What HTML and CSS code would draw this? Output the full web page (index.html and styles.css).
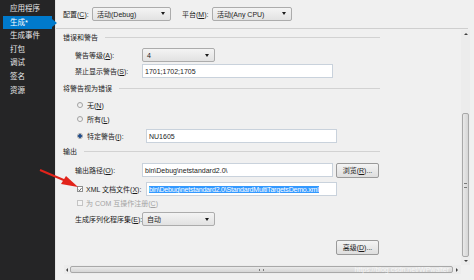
FILE: index.html
```html
<!DOCTYPE html>
<html lang="zh-CN">
<head>
  <meta charset="UTF-8" />
  <meta name="viewport" content="width=device-width, initial-scale=1.0"/>
  <title>生成</title>
  <link rel="stylesheet" href="styles.css">
</head>
<body>
<div class="window">

  <nav class="sidebar">
    <div class="nav-item">应用程序</div>
    <div class="nav-item active">生成*</div>
    <div class="nav-item">生成事件</div>
    <div class="nav-item">打包</div>
    <div class="nav-item">调试</div>
    <div class="nav-item">签名</div>
    <div class="nav-item">资源</div>
  </nav>

  <main class="page">
    <div class="topbar">
      <span class="top-label">配置(<u>C</u>):</span>
      <div class="select config"><span>活动(Debug)</span><i class="caret"></i></div>
      <span class="top-label second">平台(<u>M</u>):</span>
      <div class="select platform"><span>活动(Any CPU)</span><i class="caret"></i></div>
    </div>

    <div class="scroller">
      <div class="form">
        <div class="section first">错误和警告</div>
        <div class="row row-level">
          <span class="field-label">警告等级(<u>A</u>):</span>
          <div class="select small"><span>4</span><i class="caret"></i></div>
        </div>
        <div class="row row-tight">
          <span class="field-label">禁止显示警告(<u>S</u>):</span>
          <div class="input">1701;1702;1705</div>
        </div>

        <div class="section s-errors">将警告视为错误</div>
        <div class="row choice first-choice">
          <span class="radio"></span><span>无(<u>N</u>)</span>
        </div>
        <div class="row choice">
          <span class="radio"></span><span>所有(<u>L</u>)</span>
        </div>
        <div class="row choice with-input">
          <span class="choice-label"><span class="radio checked"></span><span>特定警告(<u>I</u>):</span></span>
          <div class="input">NU1605</div>
        </div>

        <div class="section s-output">输出</div>
        <div class="row row-path">
          <span class="field-label">输出路径(<u>O</u>):</span>
          <div class="input">bin\Debug\netstandard2.0\</div>
          <div class="button">浏览(<u>R</u>)...</div>
        </div>
        <div class="row choice row-xml">
          <span class="choice-label">
            <span class="check"><svg width="5" height="5" viewBox="0 0 5 5"><path d="M0.6 2.6 L1.9 4 L4.4 0.8" fill="none" stroke="#2b2b2b" stroke-width="0.9"/></svg></span>
            <span>XML 文档文件(<u>X</u>):</span>
          </span>
          <div class="input"><span class="selected">bin\Debug\netstandard2.0\StandardMultiTargetsDemo.xml</span></div>
        </div>
        <div class="row choice disabled">
          <span class="check off"></span><span>为 COM 互操作注册(<u>C</u>)</span>
        </div>
        <div class="row row-serial">
          <span class="field-label">生成序列化程序集(<u>E</u>):</span>
          <div class="select small"><span>自动</span><i class="caret"></i></div>
        </div>
        <div class="row row-advanced">
          <div class="button">高级(<u>D</u>)...</div>
        </div>
      </div>

      <div class="vscroll">
        <i class="arrow up"></i>
        <div class="vspace"></div>
        <div class="thumb vthumb"><i class="grip"></i></div>
        <i class="arrow down"></i>
      </div>

      <div class="hscroll">
        <i class="arrow left"></i>
        <div class="thumb hthumb"><i class="grip"></i></div>
        <i class="arrow right"></i>
        <span class="watermark">https://blog.csdn.net/WPwalter</span>
      </div>
    </div>
  </main>

  <!-- red annotation arrow -->
  <svg class="annotation" width="90" height="30" viewBox="0 0 90 30">
    <path d="M40 6 L66 17" stroke="#e2231a" stroke-width="2" fill="none"/>
    <path d="M78 23 L61 20 L66 12 Z" fill="#e2231a"/>
  </svg>
</div>
</body>
</html>
```

FILE: styles.css
```css
body {
  margin: 0;
  font-family: "Liberation Sans", "Noto Sans CJK SC", sans-serif;
  font-size: 7px;
  color: #1b1b1b;
  background-color: #f0f0f0;
}

u {
  text-decoration: underline;
  text-underline-offset: 1px;
}

.window {
  position: relative;
  display: flex;
  width: 474px;
  height: 280px;
  overflow: hidden;
  white-space: nowrap;
}

/* left navigation */

.sidebar {
  width: 55px;
  flex: none;
  padding-top: 2px;
  background-color: #252526;
}

.nav-item {
  position: relative;
  height: 13.6px;
  line-height: 13.6px;
  margin-left: 3px;
  width: 49px;
  padding-left: 7px;
  box-sizing: border-box;
  color: #e8e8e8;
  font-size: 7.5px;
}

.nav-item.active {
  background-color: #007acc;
  color: #ffffff;
}

.nav-item.active::after {
  content: "";
  position: absolute;
  right: -5px;
  top: 3px;
  border-left: 5px solid #007acc;
  border-top: 4px solid transparent;
  border-bottom: 4px solid transparent;
}

/* page */

.page {
  flex: 1;
  display: flex;
  flex-direction: column;
  border-left: 1px solid #e4e4e4;
}

.topbar {
  display: flex;
  align-items: center;
  padding-left: 7px;
  margin-right: 6px;
  border-bottom: 1px solid #cfcfcf;
  box-sizing: border-box;
  height: 29px;
  padding-bottom: 1px;
}

.top-label {
  width: 29px;
}

.top-label.second {
  width: 30px;
  margin-left: 11px;
}

.select {
  height: 14px;
  display: flex;
  align-items: center;
  justify-content: space-between;
  padding: 0 5px 0 4px;
  box-sizing: border-box;
  border: 1px solid #acacac;
  border-radius: 2px;
  background: linear-gradient(#f4f4f4, #e2e2e2);
}

.select.config {
  width: 79px;
}

.select.platform {
  width: 80px;
}

.select.small {
  width: 73px;
}

.caret {
  width: 0;
  height: 0;
  border-top: 3px solid #1b1b1b;
  border-left: 2px solid transparent;
  border-right: 2px solid transparent;
}

.scroller {
  flex: 1;
  display: grid;
  grid-template-columns: 405px 9px;
  grid-template-rows: 235px 9px;
  margin-top: 1px;
}

.form {
  padding-left: 7px;
  overflow: hidden;
}

.section {
  width: 317px;
  height: 12px;
  display: flex;
  align-items: center;
}

.section::after {
  content: "";
  flex: 1;
  margin-left: 7px;
  border-top: 1px solid #d2d2d2;
}

.section.first {
  margin-top: 1px;
}

.section.s-errors {
  margin-top: 4px;
}

.section.s-output {
  margin-top: 2px;
}

.row {
  height: 14px;
  display: flex;
  align-items: center;
  padding-left: 12px;
}

.row-level {
  margin-top: 5px;
}

.row-tight {
  margin-top: 2px;
}

.field-label {
  width: 67px;
  flex: none;
}

.input {
  width: 191px;
  height: 14px;
  box-sizing: border-box;
  padding: 0 2px;
  display: flex;
  align-items: center;
  background-color: #ffffff;
  border: 1px solid #c9d2dc;
  overflow: hidden;
}

.selected {
  background-color: #3399ff;
  color: #ffffff;
  letter-spacing: -0.2px;
}

.button {
  width: 43px;
  height: 15px;
  box-sizing: border-box;
  margin-left: 3px;
  display: flex;
  align-items: center;
  justify-content: center;
  border: 1px solid #9a9a9a;
  border-radius: 2px;
  background: linear-gradient(#f4f4f4, #dedede);
}

/* radios and checkboxes */

.choice {
  padding-left: 14px;
  gap: 4px;
}

.first-choice {
  margin-top: 4px;
}

.with-input {
  margin-top: 3px;
}

.choice-label {
  width: 65px;
  flex: none;
  display: flex;
  align-items: center;
  gap: 4px;
}

.radio {
  width: 6px;
  height: 6px;
  box-sizing: border-box;
  border-radius: 50%;
  border: 1px solid #a2a2a2;
  background: linear-gradient(#e8e8e8, #fafafa);
}

.radio.checked {
  background: radial-gradient(circle, #1f4d8f 0 1.6px, #f2f2f2 2px);
}

.check {
  flex: none;
  width: 6px;
  height: 6px;
  box-sizing: border-box;
  border: 1px solid #8e8f8f;
  background-color: #ffffff;
  display: flex;
  align-items: center;
  justify-content: center;
}

.check.off {
  border-color: #c4c4c4;
  background-color: #f4f4f4;
}

.row-path {
  margin-top: 6px;
}

.row-xml {
  margin-top: 5px;
}

.row-xml .choice-label {
  gap: 3px;
}

.disabled {
  color: #a3a3a3;
  gap: 3px;
}

.row-serial {
  margin-top: 2px;
}

.row-advanced {
  margin-top: 14px;
  padding-left: 270px;
}

/* scrollbars */

.vscroll {
  grid-column: 2;
  grid-row: 1;
  display: flex;
  flex-direction: column;
  align-items: center;
  background-color: #ececec;
}

.vspace {
  height: 75px;
}

.thumb {
  box-sizing: border-box;
  border: 1px solid #a8a8a8;
  border-radius: 2px;
  background: linear-gradient(90deg, #e9e9e9, #d6d6d6);
  display: flex;
  align-items: center;
  justify-content: center;
}

.vthumb {
  width: 7px;
  flex: 1;
}

.grip {
  width: 3px;
  height: 3px;
  border-top: 1px solid #7a7a7a;
  border-bottom: 1px solid #7a7a7a;
}

.hthumb .grip {
  width: 3px;
  height: 2px;
  border: none;
  border-left: 1px solid #7a7a7a;
  border-right: 1px solid #7a7a7a;
}

.arrow {
  flex: none;
  width: 0;
  height: 0;
  margin: 3px 0;
}

.arrow.up {
  border-bottom: 2px solid #404040;
  border-left: 2px solid transparent;
  border-right: 2px solid transparent;
}

.arrow.down {
  border-top: 2px solid #404040;
  border-left: 2px solid transparent;
  border-right: 2px solid transparent;
}

.hscroll {
  grid-column: 1;
  grid-row: 2;
  position: relative;
  margin-left: 8px;
  display: flex;
  align-items: center;
  background-color: #ececec;
}

.hthumb {
  flex: 1;
  height: 7px;
  background: linear-gradient(#e9e9e9, #d6d6d6);
}

.arrow.left {
  margin: 0 2px;
  border-right: 2px solid #404040;
  border-top: 2px solid transparent;
  border-bottom: 2px solid transparent;
}

.arrow.right {
  margin: 0 3px;
  border-left: 2px solid #404040;
  border-top: 2px solid transparent;
  border-bottom: 2px solid transparent;
}

.watermark {
  position: absolute;
  right: 12px;
  top: 0;
  line-height: 9px;
  color: rgba(255, 255, 255, 0.75);
}

.annotation {
  position: absolute;
  left: 0;
  top: 164px;
}
```
